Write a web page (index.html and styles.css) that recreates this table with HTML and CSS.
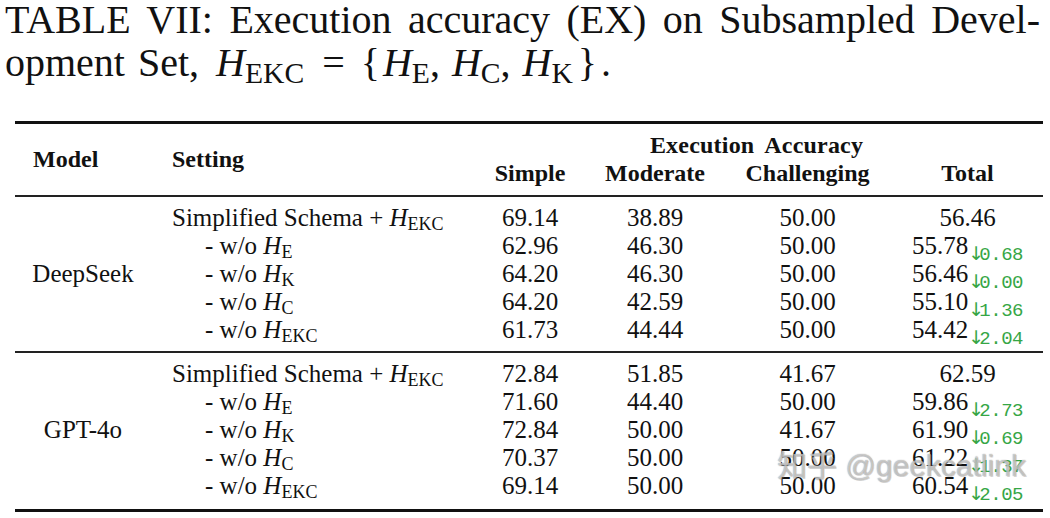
FILE: index.html
```html
<!DOCTYPE html>
<html lang="en">
<head>
<meta charset="utf-8">
<title>Table VII</title>
<link rel="stylesheet" href="styles.css">
</head>
<body>
<div class="page">
  <div class="caption">
    <div class="cap-line line-one">TABLE VII: Execution accuracy (EX) on Subsampled Devel-</div>
    <div class="cap-line line-two">opment Set, <span class="math"><i>H</i><sub>EKC</sub></span><span class="eq">=</span><span class="brace">{</span><i>H</i><sub>E</sub><span class="sep">,</span><i>H</i><sub>C</sub><span class="sep">,</span><i>H</i><sub>K</sub><span class="brace close">}</span>.</div>
  </div>

  <table class="results">
    <colgroup>
      <col class="c-model">
      <col class="c-setting">
      <col class="c-simple">
      <col class="c-moderate">
      <col class="c-challenging">
      <col class="c-total">
    </colgroup>
    <thead>
      <tr class="h1">
        <th rowspan="2" class="h-left h-model">Model</th>
        <th rowspan="2" class="h-left h-setting">Setting</th>
        <th colspan="4" class="group">Execution Accuracy</th>
      </tr>
      <tr class="h2">
        <th>Simple</th>
        <th>Moderate</th>
        <th>Challenging</th>
        <th class="total">Total</th>
      </tr>
    </thead>
    <tbody class="grp grp-a">
      <tr class="first">
        <td rowspan="5" class="model">DeepSeek</td>
        <td class="setting">Simplified Schema + <i>H</i><sub>EKC</sub></td>
        <td>69.14</td><td>38.89</td><td>50.00</td><td class="total">56.46</td>
      </tr>
      <tr>
        <td class="setting sub-row">- w/o <i>H</i><sub>E</sub></td>
        <td>62.96</td><td>46.30</td><td>50.00</td><td class="total">55.78<span class="delta"><span class="arrow">↓</span>0.68</span></td>
      </tr>
      <tr>
        <td class="setting sub-row">- w/o <i>H</i><sub>K</sub></td>
        <td>64.20</td><td>46.30</td><td>50.00</td><td class="total">56.46<span class="delta"><span class="arrow">↓</span>0.00</span></td>
      </tr>
      <tr>
        <td class="setting sub-row">- w/o <i>H</i><sub>C</sub></td>
        <td>64.20</td><td>42.59</td><td>50.00</td><td class="total">55.10<span class="delta"><span class="arrow">↓</span>1.36</span></td>
      </tr>
      <tr class="last">
        <td class="setting sub-row">- w/o <i>H</i><sub>EKC</sub></td>
        <td>61.73</td><td>44.44</td><td>50.00</td><td class="total">54.42<span class="delta"><span class="arrow">↓</span>2.04</span></td>
      </tr>
    </tbody>
    <tbody class="grp grp-b">
      <tr class="first">
        <td rowspan="5" class="model">GPT-4o</td>
        <td class="setting">Simplified Schema + <i>H</i><sub>EKC</sub></td>
        <td>72.84</td><td>51.85</td><td>41.67</td><td class="total">62.59</td>
      </tr>
      <tr>
        <td class="setting sub-row">- w/o <i>H</i><sub>E</sub></td>
        <td>71.60</td><td>44.40</td><td>50.00</td><td class="total">59.86<span class="delta"><span class="arrow">↓</span>2.73</span></td>
      </tr>
      <tr>
        <td class="setting sub-row">- w/o <i>H</i><sub>K</sub></td>
        <td>72.84</td><td>50.00</td><td>41.67</td><td class="total">61.90<span class="delta"><span class="arrow">↓</span>0.69</span></td>
      </tr>
      <tr>
        <td class="setting sub-row">- w/o <i>H</i><sub>C</sub></td>
        <td>70.37</td><td>50.00</td><td>50.00</td><td class="total">61.22<span class="delta"><span class="arrow">↓</span>1.37</span></td>
      </tr>
      <tr class="last">
        <td class="setting sub-row">- w/o <i>H</i><sub>EKC</sub></td>
        <td>69.14</td><td>50.00</td><td>50.00</td><td class="total">60.54<span class="delta"><span class="arrow">↓</span>2.05</span></td>
      </tr>
    </tbody>
  </table>

  <div class="watermark">知乎 @geekcatlink</div>
</div>
</body>
</html>
```

FILE: styles.css
```css
html, body {
  margin: 0;
  padding: 0;
  background: #ffffff;
}

.page {
  position: relative;
  width: 1050px;
  height: 518px;
  overflow: hidden;
  color: #111111;
  font-family: "Liberation Serif", "Times New Roman", serif;
}

/* ---------- caption ---------- */
.caption {
  padding-left: 5px;
  width: 1035px;
  font-size: 40px;
}

.cap-line {
  white-space: nowrap;
}

.line-one {
  line-height: 40px;
  white-space: normal;
  text-align: justify;
  text-align-last: justify;
}

.line-two {
  line-height: 46px;
  word-spacing: 3px;
}

.caption i {
  font-style: italic;
}

.caption sub {
  font-size: 0.74em;
  vertical-align: -0.22em;
  line-height: 0;
}

.math {
  margin-left: 4px;
}

.eq {
  margin: 0 16px 0 18px;
}

.brace {
  margin-right: 3px;
}

.brace.close {
  margin: 0 4px 0 5px;
}

.sep {
  margin-right: 12px;
}

/* ---------- table ---------- */
.results {
  margin-top: 35px;
  margin-left: 15px;
  width: 1028px;
  table-layout: fixed;
  border-collapse: separate;
  border-spacing: 0;
}

.c-model { width: 140px; }
.c-setting { width: 315px; }
.c-simple { width: 120px; }
.c-moderate { width: 130px; }
.c-challenging { width: 175px; }
.c-total { width: 148px; }

.results th {
  font-size: 24px;
  line-height: 28px;
  font-weight: bold;
  text-align: center;
  padding: 0;
  white-space: nowrap;
}

.results td {
  font-size: 25px;
  line-height: 28px;
  text-align: center;
  padding: 0;
  white-space: nowrap;
}

.results .total {
  padding-right: 3px;
}

/* header rules & spacing */
.results .h1 th {
  border-top: 3px solid #111;
  padding-top: 7px;
}

.results .h2 th {
  border-bottom: 2px solid #222;
  padding-bottom: 8px;
}

.results .h1 th.h-left {
  text-align: left;
  vertical-align: middle;
  padding-bottom: 8px;
  border-bottom: 2px solid #222;
}

.results .h1 th.h-model {
  padding-left: 18px;
}

.results .h1 th.h-setting {
  padding-left: 17px;
}

.group {
  word-spacing: 5px;
  letter-spacing: 0.2px;
}

/* body */
.results td.setting {
  text-align: left;
  padding-left: 17px;
}

.results td.setting.sub-row {
  padding-left: 50px;
}

.results td.model {
  vertical-align: middle;
  padding-right: 4px;
}

.results i {
  font-style: italic;
}

.results sub {
  font-size: 0.72em;
  vertical-align: -0.24em;
  line-height: 0;
}

.grp .first td {
  padding-top: 7px;
}

.grp-a .last td,
.grp-a td.model {
  padding-bottom: 7px;
  border-bottom: 2px solid #222;
}

.grp-b .last td,
.grp-b td.model {
  padding-bottom: 9px;
  border-bottom: 3px solid #111;
}

.delta {
  font-family: "Liberation Mono", "DejaVu Sans Mono", monospace;
  font-size: 19px;
  line-height: 0;
  vertical-align: -6px;
  color: #36a645;
  letter-spacing: -0.5px;
}

.arrow {
  font-family: "DejaVu Sans", sans-serif;
  font-size: 19px;
  display: inline-block;
  width: 10px;
  text-align: center;
  margin-right: 1px;
}

/* ---------- watermark overlay ---------- */
.watermark {
  position: absolute;
  left: 777px;
  top: 448px;
  font-family: "Liberation Sans", "Noto Sans CJK SC", sans-serif;
  font-size: 30px;
  line-height: 36px;
  white-space: nowrap;
  color: rgba(245, 245, 245, 0.55);
  text-shadow: 0 0 1px rgba(90, 90, 90, 0.7), 1px 1px 0 rgba(150, 150, 150, 0.35);
}
```
